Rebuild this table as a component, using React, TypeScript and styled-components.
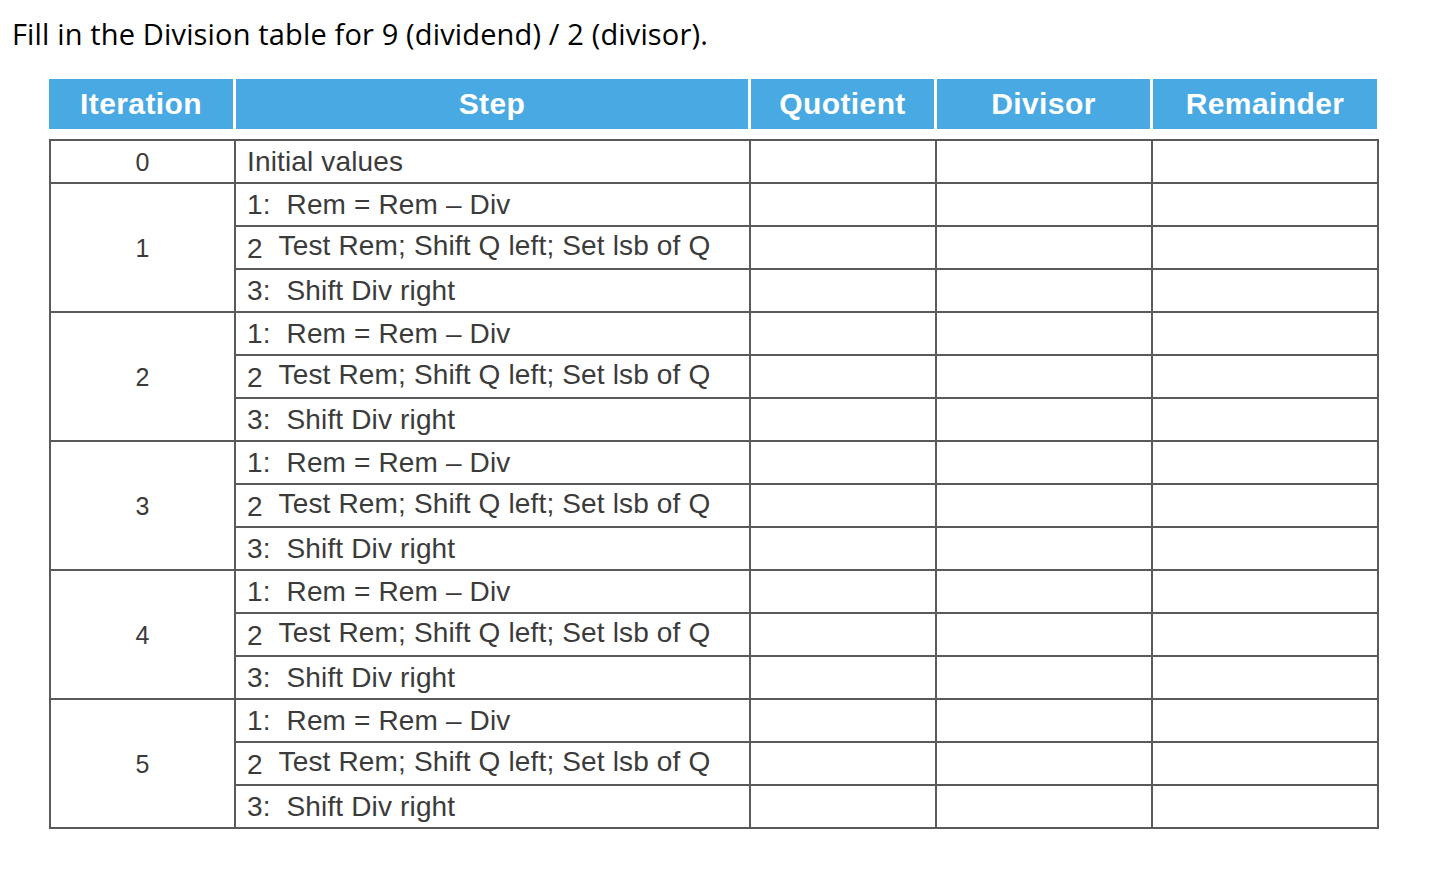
import styled, { createGlobalStyle } from 'styled-components';

const GlobalStyle = createGlobalStyle`
  body {
    margin: 0;
    background: #ffffff;
    font-family: 'Liberation Sans', Arial, sans-serif;
  }
`;

const Page = styled.div`
  padding: 15px 0 0 12px;
`;

const Title = styled.h1`
  margin: 0 0 26px;
  font-family: 'Open Sans', 'Liberation Sans', sans-serif;
  font-weight: 400;
  font-size: 29px;
  line-height: 38px;
  color: #000;
  letter-spacing: 0.15px;
`;

const Frame = styled.div`
  margin-left: 37px;
  width: 1328px;
`;

const HeadRow = styled.div`
  display: grid;
  grid-template-columns: 184px 512px 183px 213px 224px;
  column-gap: 3px;
`;

const HeadCell = styled.div`
  height: 50px;
  display: flex;
  align-items: center;
  justify-content: center;
  background: #49a9e3;
  color: #fff;
  font-weight: 700;
  font-size: 30px;
  letter-spacing: 0.4px;
`;

const BodyTable = styled.table`
  margin-top: 10px;
  width: 100%;
  border-collapse: collapse;
  table-layout: fixed;
  border: 2px solid #5a5a5a;
`;

const Cell = styled.td`
  height: 41px;
  padding: 0;
  border: 2px solid #5a5a5a;
  color: #3b3b3b;
  font-size: 28px;
  line-height: 32px;
  letter-spacing: 0.15px;
  vertical-align: middle;
`;

const IterCell = styled(Cell)`
  text-align: center;
  font-size: 25px;
`;

const StepCell = styled(Cell)`
  padding-left: 11px;
  white-space: nowrap;
`;

const LowDigit = styled.span`
  vertical-align: -3px;
`;

const columns = [
  { label: 'Iteration', w: 185 },
  { label: 'Step', w: 515 },
  { label: 'Quotient', w: 186 },
  { label: 'Divisor', w: 216 },
  { label: 'Remainder', w: 226 },
];

const steps = [
  <>1:&nbsp;&nbsp;Rem = Rem – Div</>,
  <>
    <LowDigit>2</LowDigit>&nbsp;&nbsp;Test Rem; Shift Q left; Set lsb of Q
  </>,
  <>3:&nbsp;&nbsp;Shift Div right</>,
];

const EmptyCells = () => (
  <>
    <Cell />
    <Cell />
    <Cell />
  </>
);

export default function App() {
  return (
    <>
      <GlobalStyle />
      <Page>
        <Title>Fill in the Division table for 9 (dividend) / 2 (divisor).</Title>
        <Frame>
          <HeadRow>
            {columns.map((c) => (
              <HeadCell key={c.label}>{c.label}</HeadCell>
            ))}
          </HeadRow>
          <BodyTable>
            <colgroup>
              {columns.map((c) => (
                <col key={c.label} style={{ width: c.w }} />
              ))}
            </colgroup>
            <tbody>
              <tr>
                <IterCell>0</IterCell>
                <StepCell>Initial values</StepCell>
                <EmptyCells />
              </tr>
              {[1, 2, 3, 4, 5].map((n) =>
                steps.map((s, i) => (
                  <tr key={`${n}-${i}`}>
                    {i === 0 && <IterCell rowSpan={3}>{n}</IterCell>}
                    <StepCell>{s}</StepCell>
                    <EmptyCells />
                  </tr>
                ))
              )}
            </tbody>
          </BodyTable>
        </Frame>
      </Page>
    </>
  );
}
